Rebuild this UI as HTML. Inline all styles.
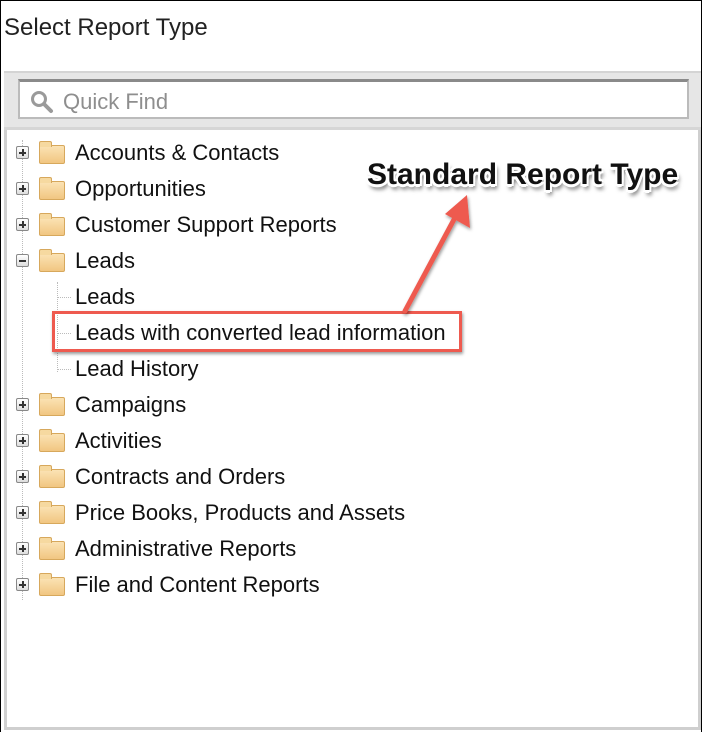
<!DOCTYPE html>
<html><head><style>
*{margin:0;padding:0;box-sizing:border-box}
body{width:702px;height:732px;background:#fff;position:relative;overflow:hidden;font-family:"Liberation Sans",Arial,sans-serif;}
.frame{position:absolute;left:0;top:0;width:702px;height:732px;border:1px solid #000;border-bottom:none;}
.title{position:absolute;left:4px;top:14px;font-size:24px;color:#222;}
.band{position:absolute;left:4px;top:71px;width:697px;height:59px;background:#e6e6e6;border-top:2px solid #d4d4d4;border-bottom:3px solid #d6d6d6;}
.search{position:absolute;left:18px;top:79px;width:671px;height:40px;background:#fff;border:2px solid #bbb;border-top:3px solid #8a8a8a;}
.search span{position:absolute;left:43px;top:7px;font-size:22px;color:#8e8e8e;}
.tree{position:absolute;left:4px;top:130px;width:697px;height:600px;border-left:3px solid #d0d0d0;border-right:3px solid #cfcfcf;border-bottom:3px solid #cfcfcf;}
.vline{position:absolute;left:22px;top:140px;height:460px;border-left:1px dotted #bbb;}
.row{position:absolute;left:0;height:36px;width:640px;}
.pm{position:absolute;left:16px;top:-7px;width:13px;height:13px;border:1px solid #888;background:linear-gradient(#fff,#ddd);border-radius:2px;}
.pm:before{content:"";position:absolute;left:2px;top:5px;width:7px;height:1.5px;background:#333;}
.pm.p:after{content:"";position:absolute;left:5px;top:2px;width:1.5px;height:7px;background:#333;}
.fd{position:absolute;left:39px;top:-8px;width:26px;height:19px;background:linear-gradient(#fbe3b4,#f1c681);border:1px solid #d7a85c;border-radius:2px;}
.fd:before{content:"";position:absolute;left:-1px;top:-5px;width:11px;height:5px;background:#f6d9a0;border:1px solid #d7a85c;border-bottom:none;border-radius:2px 2px 0 0;}
.t{position:absolute;left:75px;top:-13px;font-size:22px;color:#111;white-space:nowrap;}
.dot{position:absolute;left:57px;top:0;width:14px;border-top:1px dotted #bbb;}
.sub{position:absolute;left:57px;top:282px;height:90px;border-left:1px dotted #bbb;}
.red{position:absolute;left:52px;top:311px;width:410px;height:41px;border:3px solid #ee5a4f;box-shadow:1px 2px 3px rgba(0,0,0,.4);}
.lab{position:absolute;left:367px;top:158px;font-size:30px;font-weight:bold;color:#111;white-space:nowrap;
text-shadow:-2px -2px 0 #fff,2px -2px 0 #fff,-2px 2px 0 #fff,2px 2px 0 #fff,0 3px 0 #fff,2px 5px 4px rgba(0,0,0,.6);}
</style></head><body>
<div class="frame"></div>
<div class="title">Select Report Type</div>
<div class="band"></div>
<div class="search">
<svg style="position:absolute;left:10px;top:8px" width="24" height="24" viewBox="0 0 24 24"><circle cx="9" cy="9" r="6.5" fill="none" stroke="#9a9a9a" stroke-width="3"/><line x1="14" y1="14" x2="21" y2="21" stroke="#9a9a9a" stroke-width="4" stroke-linecap="round"/></svg>
<span>Quick Find</span></div>
<div class="tree"></div>
<div class="vline"></div>
<div class="sub"></div>
<div class="row" style="top:153px"><div class="pm p"></div><div class="fd"></div><div class="t">Accounts &amp; Contacts</div></div>
<div class="row" style="top:189px"><div class="pm p"></div><div class="fd"></div><div class="t">Opportunities</div></div>
<div class="row" style="top:225px"><div class="pm p"></div><div class="fd"></div><div class="t">Customer Support Reports</div></div>
<div class="row" style="top:261px"><div class="pm"></div><div class="fd"></div><div class="t">Leads</div></div>
<div class="row" style="top:297px"><div class="dot"></div><div class="t">Leads</div></div>
<div class="row" style="top:333px"><div class="dot"></div><div class="t">Leads with converted lead information</div></div>
<div class="row" style="top:369px"><div class="dot"></div><div class="t">Lead History</div></div>
<div class="row" style="top:405px"><div class="pm p"></div><div class="fd"></div><div class="t">Campaigns</div></div>
<div class="row" style="top:441px"><div class="pm p"></div><div class="fd"></div><div class="t">Activities</div></div>
<div class="row" style="top:477px"><div class="pm p"></div><div class="fd"></div><div class="t">Contracts and Orders</div></div>
<div class="row" style="top:513px"><div class="pm p"></div><div class="fd"></div><div class="t">Price Books, Products and Assets</div></div>
<div class="row" style="top:549px"><div class="pm p"></div><div class="fd"></div><div class="t">Administrative Reports</div></div>
<div class="row" style="top:585px"><div class="pm p"></div><div class="fd"></div><div class="t">File and Content Reports</div></div>
<div class="red"></div>
<svg style="position:absolute;left:0;top:0" width="702" height="732">
<defs><filter id="s"><feDropShadow dx="1" dy="2" stdDeviation="1.5" flood-opacity=".4"/></filter></defs>
<g filter="url(#s)"><line x1="405" y1="311" x2="458" y2="212" stroke="#ee5a4f" stroke-width="5" stroke-linecap="round"/>
<polygon points="467,195 470,228 445,214" fill="#ee5a4f"/></g>
</svg>
<div class="lab">Standard Report Type</div>
</body></html>
